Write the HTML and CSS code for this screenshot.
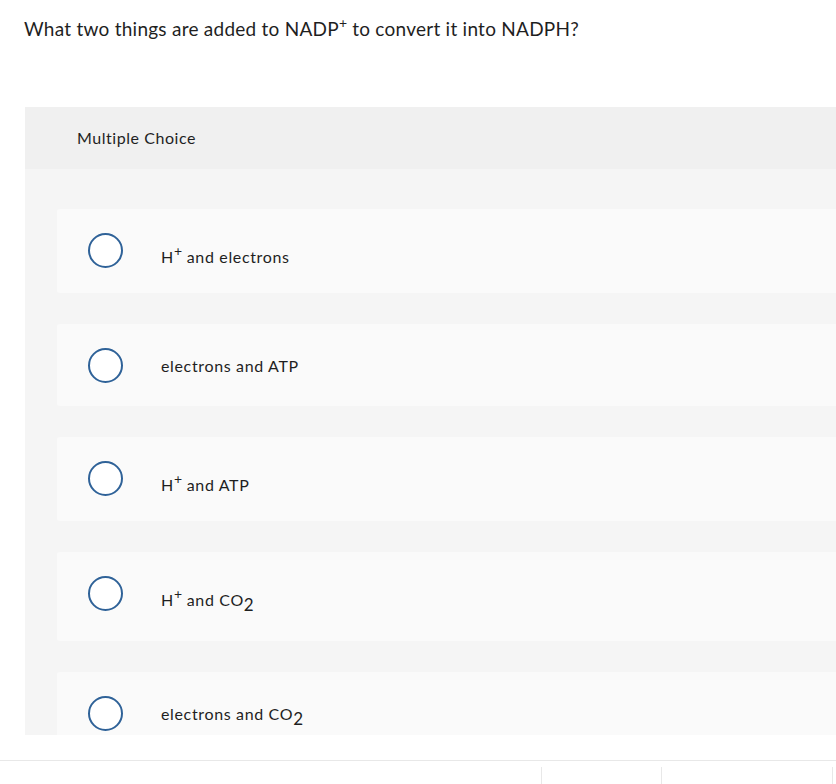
FILE: index.html
```html
<!DOCTYPE html>
<html>
<head>
<meta charset="utf-8">
<link rel="stylesheet" href="styles.css">
</head>
<body>
<div class="page">
  <p class="question">What two things are added to NADP<sup class="sup-q">+</sup> to convert it into NADPH?</p>
  <div class="panel">
    <div class="panel-head">Multiple Choice</div>
    <div class="panel-body">
      <div class="option"><span class="radio"></span><span class="label">H<sup class="sup">+</sup> and electrons</span></div>
      <div class="option"><span class="radio"></span><span class="label">electrons and ATP</span></div>
      <div class="option"><span class="radio"></span><span class="label">H<sup class="sup">+</sup> and ATP</span></div>
      <div class="option"><span class="radio"></span><span class="label">H<sup class="sup">+</sup> and CO<sub class="sub">2</sub></span></div>
      <div class="option"><span class="radio"></span><span class="label">electrons and CO<sub class="sub">2</sub></span></div>
    </div>
  </div>
  <div class="footer">
    <div class="footer-spacer"></div>
    <div class="footer-cell cell-a"></div>
    <div class="footer-cell cell-b"></div>
    <div class="footer-cell cell-c"></div>
  </div>
</div>
</body>
</html>
```

FILE: styles.css
```css
html, body {
  margin: 0;
  padding: 0;
  background: #ffffff;
}
body {
  font-family: Lato, "Liberation Sans", sans-serif;
  color: #1f1f1f;
}
.page {
  width: 836px;
  height: 784px;
  overflow: hidden;
}
.question {
  margin: 0;
  padding: 16px 0 0 24px;
  height: 91px;
  box-sizing: border-box;
  font-size: 19px;
  line-height: 26px;
  letter-spacing: 0.25px;
}
.sup-q {
  font-size: 14px;
  line-height: 0;
  vertical-align: 0;
  position: relative;
  top: -8px;
  letter-spacing: 0;
}
.sup {
  font-size: 14px;
  vertical-align: 7px;
  letter-spacing: 0;
}
.sub {
  font-size: 17px;
  vertical-align: -5px;
  letter-spacing: 0;
}
.panel {
  margin-left: 25px;
  height: 628px;
  overflow: hidden;
  background: #f5f5f5;
  margin-top: 16px;
}
.panel-head {
  height: 62px;
  background: #f0f0f0;
  display: flex;
  align-items: center;
  padding-left: 52px;
  padding-bottom: 2px;
  box-sizing: border-box;
  font-size: 16px;
  letter-spacing: 0.55px;
}
.panel-body {
  padding: 40px 0 40px 32px;
  display: flex;
  flex-direction: column;
  gap: 31px;
}
.option {
  background: #fafafa;
  border-radius: 3px 0 0 3px;
  padding: 21px 0 24px 31px;
  display: flex;
  align-items: flex-start;
  gap: 38px;
}
.radio {
  width: 35px;
  height: 35px;
  box-sizing: border-box;
  border: 2px solid #2f6298;
  border-radius: 50%;
  background: #ffffff;
  flex: none;
  margin-top: 3px;
  margin-bottom: -1px;
}
.label {
  display: block;
  font-size: 16px;
  line-height: 30px;
  padding-top: 6px;
  margin-bottom: -3px;
  letter-spacing: 0.65px;
}
.footer {
  margin-top: 25px;
  border-top: 1px solid #e8e8e8;
  display: flex;
  padding-top: 6px;
  height: 30px;
}
.footer-spacer {
  width: 542px;
}
.footer-cell {
  border-left: 1px solid #e8e8e8;
}
.cell-a { width: 119px; }
.cell-b { width: 170px; }
.cell-c { width: 3px; }
```
